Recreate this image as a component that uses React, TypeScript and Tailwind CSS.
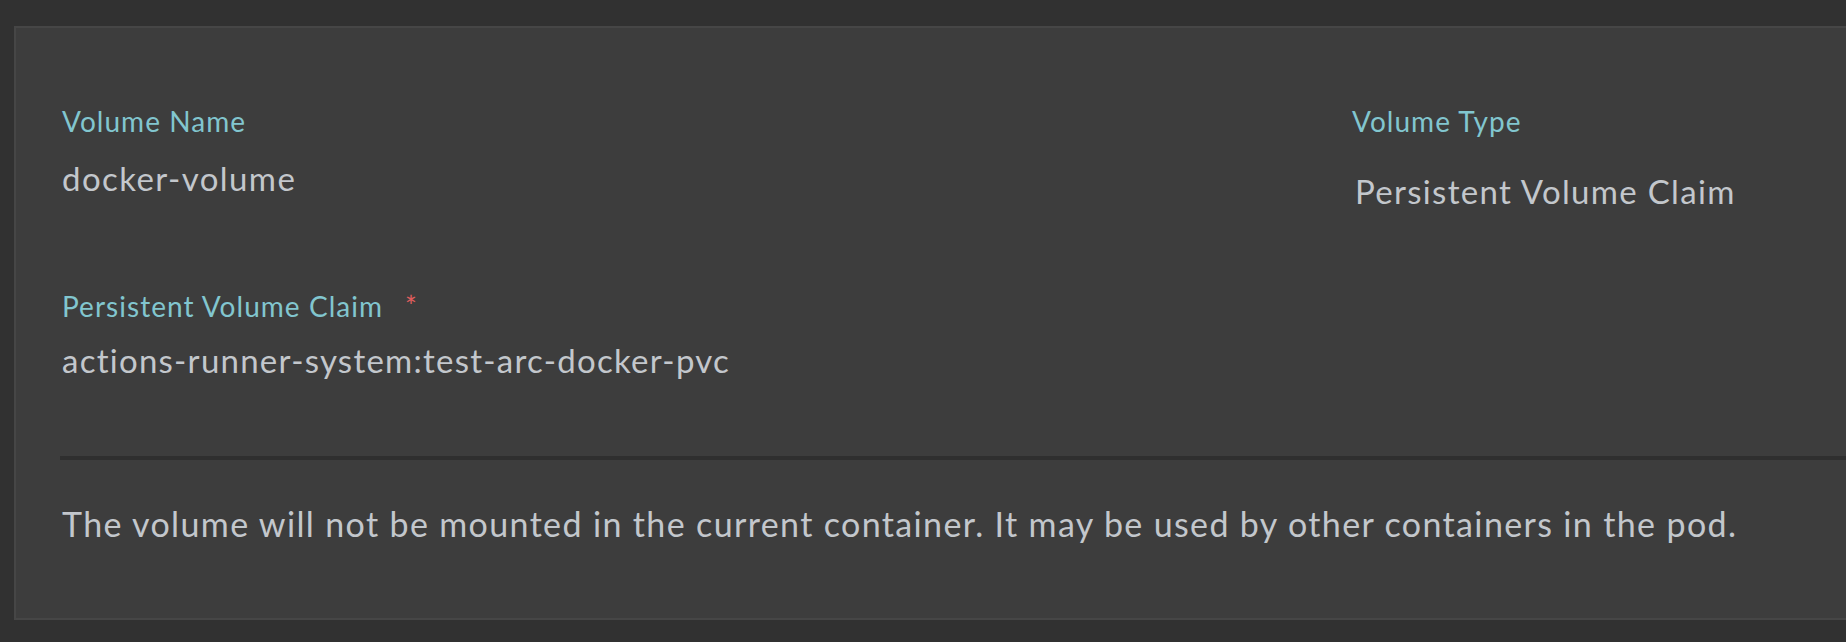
export default function App() {
  return (
    <div className="h-[642px] w-full overflow-hidden bg-[#313131] pt-[26px] pl-[14px] font-['Lato',sans-serif]">
      <div className="h-[594px] w-[1900px] border-2 border-[#464646] bg-[#3d3d3d] pl-[46px] pt-[79px]">
        <div className="grid grid-cols-[1290px_1fr]">
          <div>
            <div className="text-[28px] leading-none tracking-[0.037em] text-[#82c6cf]">Volume Name</div>
            <div className="mt-[27px] text-[33px] leading-none tracking-[0.043em] text-[#c3c7cc]">docker-volume</div>
          </div>
          <div>
            <div className="text-[28px] leading-none tracking-[0.037em] text-[#82c6cf]">Volume Type</div>
            <div className="mt-[40px] pl-[3px] text-[33px] leading-none tracking-[0.04em] text-[#c3c7cc]">
              Persistent Volume Claim
            </div>
          </div>
        </div>

        <div className="mt-[84px]">
          <div className="flex text-[28px] leading-none tracking-[0.037em]">
            <span className="text-[#82c6cf]">Persistent Volume Claim</span>
            <span className="ml-[22px] text-[#e05d5d]">*</span>
          </div>
          <div className="mt-[24px] text-[33px] leading-none tracking-[0.038em] text-[#c3c7cc]">
            actions-runner-system:test-arc-docker-pvc
          </div>
        </div>

        <div className="mt-[79px] -ml-[2px] h-[4px] bg-[#2f2f2f]" />

        <p className="mt-[47px] text-[34px] leading-none tracking-[0.04em] text-[#c3c7cc]">
          The volume will not be mounted in the current container. It may be used by other containers in the pod.
        </p>
      </div>
    </div>
  );
}
